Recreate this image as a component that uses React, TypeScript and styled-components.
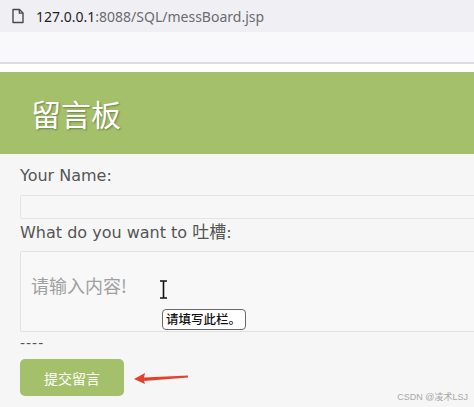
import styled, { createGlobalStyle } from "styled-components";

const GlobalStyle = createGlobalStyle`
  html, body {
    margin: 0;
    padding: 0;
    background: #f6f6f6;
    overflow: hidden;
  }
  * {
    box-sizing: border-box;
  }
`;

const cjk = `"Noto Sans CJK SC", sans-serif`;

const Page = styled.div`
  width: 474px;
  height: 407px;
  display: flex;
  flex-direction: column;
  overflow: hidden;
  position: relative;
`;

const AddressBar = styled.div`
  height: 32px;
  background: #f0f0f4;
  display: flex;
  align-items: center;
  gap: 12px;
  padding-left: 12px;
  font-family: "Noto Sans", ${cjk};
  font-size: 14px;
`;

const Host = styled.span`
  color: #1f1f1f;
`;

const Path = styled.span`
  color: #6b6b70;
`;

const Toolbar = styled.div`
  height: 32px;
  background: #f9f9fb;
  border-bottom: 2px solid #dddde1;
`;

const Gap = styled.div`
  height: 8px;
  background: #ffffff;
`;

const Header = styled.header`
  height: 82px;
  background: #a5c06a;
  display: flex;
  align-items: center;
  padding-left: 31px;
`;

const Title = styled.h1`
  margin: 0;
  font-family: "Noto Sans CJK SC", sans-serif;
  font-weight: 400;
  font-size: 30px;
  color: #ffffff;
  text-shadow: 1px 1px 2px rgba(0, 0, 0, 0.35);
`;

const Main = styled.main`
  flex: 1;
  background: #f6f6f6;
  padding: 12px 0 0 20px;
  display: flex;
  flex-direction: column;
  font-family: "DejaVu Sans", ${cjk};
  color: #555555;
`;

const Label = styled.label<{ top?: number }>`
  display: block;
  height: 20px;
  font-size: 16px;
  line-height: 20px;
  margin-top: ${(p) => p.top ?? 0}px;
`;

const Han = styled.span`
  font-family: ${cjk};
  font-size: 17px;
  line-height: 1;
`;

const Field = styled.div`
  margin-right: -30px;
  height: 24px;
  margin-top: 9px;
  background: #f7f7f7;
  border: 1px solid #e4e4e4;
  border-radius: 2px;
`;

const AreaWrap = styled.div`
  position: relative;
  margin-top: 9px;
  margin-right: -30px;
  height: 81px;
  background: #f8f8f8;
  border: 1px solid #e2e2e2;
  border-radius: 2px;
`;

const Placeholder = styled.div`
  padding: 20px 0 0 10px;
  font-family: ${cjk};
  font-size: 18px;
  color: #a0a0a0;
`;

const Caret = styled.svg`
  position: absolute;
  left: 137px;
  top: 28px;
`;

const Tip = styled.div`
  position: absolute;
  left: 141px;
  top: 57px;
  padding: 1px 4px 2px 3px;
  background: #ffffff;
  border: 1px solid #6a6a6a;
  border-radius: 4px;
  font-family: ${cjk};
  font-size: 12.5px;
  font-weight: 500;
  color: #111111;
  line-height: 16px;
`;

const Dashes = styled.div`
  margin-top: 3px;
  font-size: 14px;
  line-height: 16px;
  color: #555555;
  letter-spacing: 1px;
`;

const ActionRow = styled.div`
  margin-top: 8px;
  display: flex;
  align-items: center;
  gap: 10px;
`;

const Submit = styled.button`
  width: 104px;
  height: 37px;
  border: none;
  border-radius: 5px;
  background: #a5c06a;
  color: #ffffff;
  font-family: ${cjk};
  font-size: 14px;
  cursor: pointer;
`;

const Watermark = styled.div`
  position: absolute;
  right: 6px;
  bottom: 4px;
  font-family: "Liberation Sans", ${cjk};
  font-size: 9px;
  color: #a8a8a8;
`;

const FileIcon = () => (
  <svg width="12" height="16" viewBox="0 0 12 16" fill="none">
    <path
      d="M1 1.5 H7.5 L11 5 V14.5 H1 Z"
      stroke="#4a4a4a"
      strokeWidth="1.4"
      strokeLinejoin="round"
    />
    <path d="M7.3 1.5 V5.2 H11" stroke="#4a4a4a" strokeWidth="1.3" />
  </svg>
);

const Arrow = () => (
  <svg width="56" height="14" viewBox="0 0 56 14">
    <path d="M0 8 L11 2 L10 6.5 L54 4.5 L54 6.5 L10 10 L11 13 Z" fill="#e6402b" />
  </svg>
);

export default function App() {
  return (
    <Page>
      <GlobalStyle />
      <AddressBar>
        <FileIcon />
        <span>
          <Host>127.0.0.1</Host>
          <Path>:8088/SQL/messBoard.jsp</Path>
        </span>
      </AddressBar>
      <Toolbar />
      <Gap />
      <Header>
        <Title>留言板</Title>
      </Header>
      <Main>
        <Label>Your Name:</Label>
        <Field />
        <Label top={3}>
          What do you want to <Han>吐槽</Han>:
        </Label>
        <AreaWrap>
          <Placeholder>请输入内容!</Placeholder>
          <Caret width="11" height="19" viewBox="0 0 11 19">
            <path
              d="M2 1 H9 M5.5 1 V18 M2 18 H9"
              stroke="#111"
              strokeWidth="1.6"
              fill="none"
            />
          </Caret>
          <Tip>请填写此栏。</Tip>
        </AreaWrap>
        <Dashes>----</Dashes>
        <ActionRow>
          <Submit>提交留言</Submit>
          <Arrow />
        </ActionRow>
      </Main>
      <Watermark>CSDN @凌术LSJ</Watermark>
    </Page>
  );
}
